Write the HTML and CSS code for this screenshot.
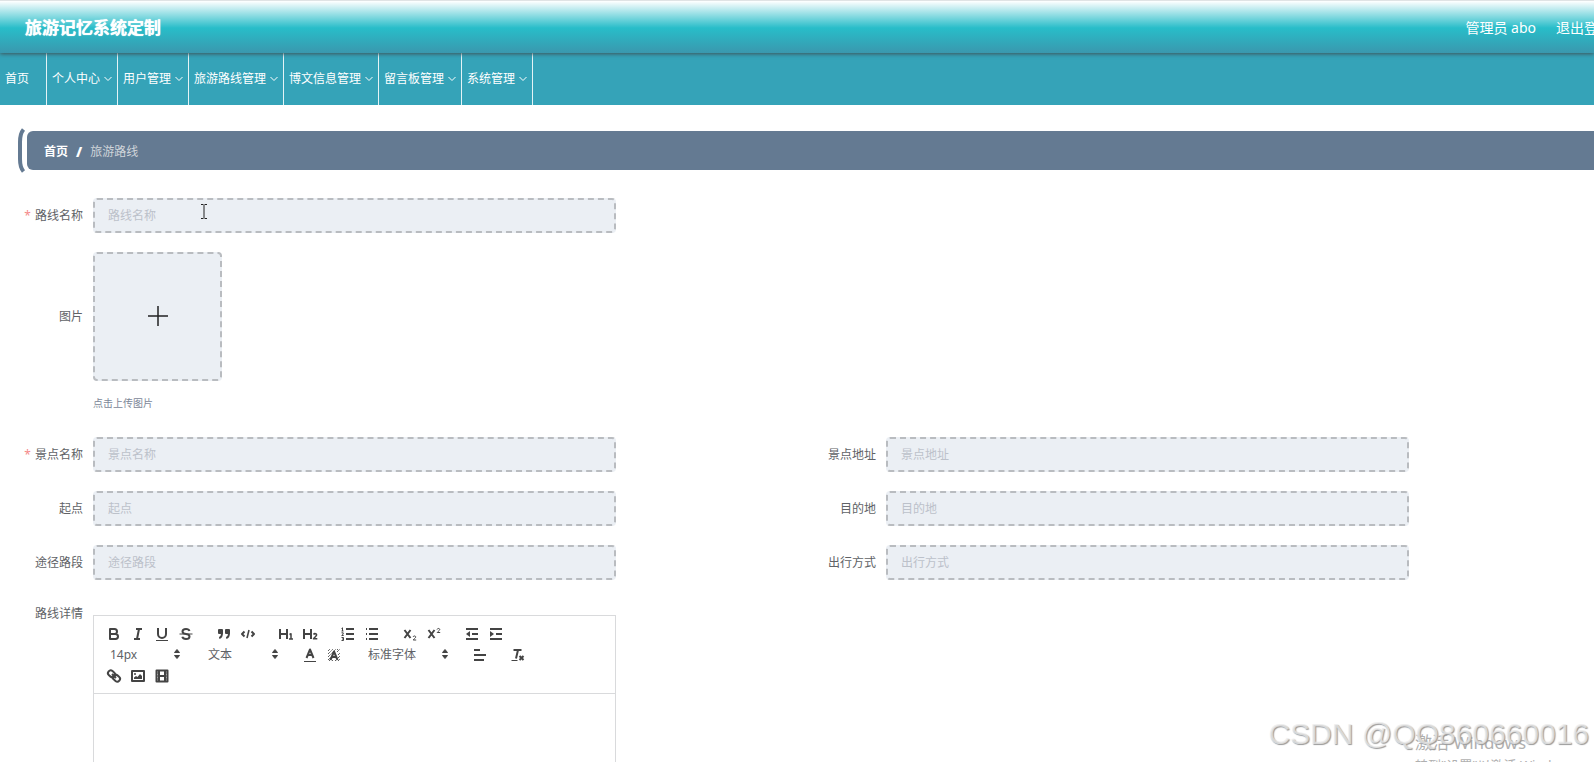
FILE: index.html
```html
<!DOCTYPE html>
<html lang="zh-CN">
<head>
<meta charset="utf-8">
<title>旅游记忆系统定制</title>
<link rel="stylesheet" href="styles.css">
</head>
<body>
<svg class="defs" aria-hidden="true">
  <symbol id="chev" viewBox="0 0 8 8"><path d="M.5 2l3.500 3.500L7.500 2" fill="none" stroke="currentColor"/></symbol>
  <symbol id="updown" viewBox="0 0 18 18"><path d="M6.500 7.500L9 4.500l2.500 3zM6.500 10.500L9 13.500l2.500-3z" fill="currentColor" stroke="currentColor" stroke-linejoin="round"/></symbol>
</svg>
<header class="top">
  <h1 class="brand">旅游记忆系统定制</h1>
  <div class="user"><span>管理员 abo</span><a href="#">退出登录</a></div>
</header>
<nav class="menu">
  <a class="menu-item" href="#">首页</a>
  <a class="menu-item" href="#">个人中心<svg class="chev"><use href="#chev"/></svg></a>
  <a class="menu-item" href="#">用户管理<svg class="chev"><use href="#chev"/></svg></a>
  <a class="menu-item" href="#">旅游路线管理<svg class="chev"><use href="#chev"/></svg></a>
  <a class="menu-item" href="#">博文信息管理<svg class="chev"><use href="#chev"/></svg></a>
  <a class="menu-item" href="#">留言板管理<svg class="chev"><use href="#chev"/></svg></a>
  <a class="menu-item" href="#">系统管理<svg class="chev"><use href="#chev"/></svg></a>
</nav>
<main class="page">
  <div class="crumbs"><svg class="bracket" viewBox="0 0 8 45" aria-hidden="true"><path d="M6.500 1.500C3.500 5 3 9 3 14v17c0 5 .5 9 3.500 12.500" fill="none" stroke="#647a92" stroke-width="4"/></svg><a href="#">首页</a><b>/</b><span>旅游路线</span></div>
  <form class="form">
    <div class="field wide required">
      <label for="name">路线名称</label>
      <div class="control">
        <input id="name" class="text" type="text" placeholder="路线名称">
        <svg class="ibeam" viewBox="0 0 8 15" aria-hidden="true"><path d="M1 .5h2.500M4.500 .5H7M4 1v13M1 14.500h2.500M4.500 14.500H7" fill="none" stroke="#222"/></svg>
      </div>
    </div>
    <div class="field wide upload-field">
      <label for="pic">图片</label>
      <div class="control">
        <button id="pic" class="upload" type="button" aria-label="上传图片"><svg viewBox="0 0 20 20"><path d="M0 9h20M10 -1v20" stroke="#222" stroke-width="1.500"/></svg></button>
        <p class="hint">点击上传图片</p>
      </div>
    </div>
    <div class="field required"><label for="spot">景点名称</label><div class="control"><input id="spot" class="text" type="text" placeholder="景点名称"></div></div>
    <div class="field"><label for="addr">景点地址</label><div class="control"><input id="addr" class="text" type="text" placeholder="景点地址"></div></div>
    <div class="field"><label for="from">起点</label><div class="control"><input id="from" class="text" type="text" placeholder="起点"></div></div>
    <div class="field"><label for="to">目的地</label><div class="control"><input id="to" class="text" type="text" placeholder="目的地"></div></div>
    <div class="field"><label for="via">途径路段</label><div class="control"><input id="via" class="text" type="text" placeholder="途径路段"></div></div>
    <div class="field"><label for="mode">出行方式</label><div class="control"><input id="mode" class="text" type="text" placeholder="出行方式"></div></div>
    <div class="field wide editor-field">
      <label for="detail">路线详情</label>
      <div class="control editor">
        <div class="toolbar">
          <div class="group">
            <button type="button" aria-label="粗体"><svg viewBox="0 0 18 18"><path class="s" d="M5 4h4.500a2.500 2.500 0 0 1 0 5H5zM5 9h5.500a2.500 2.500 0 0 1 0 5H5z"/></svg></button>
            <button type="button" aria-label="斜体"><svg viewBox="0 0 18 18"><path class="s" d="M7 4h6M5 14h6M8 14l2-10"/></svg></button>
            <button type="button" aria-label="下划线"><svg viewBox="0 0 18 18"><path class="s" d="M5 3v6a4 4 0 0 0 8 0V3"/><path class="t" d="M3 15.500h12"/></svg></button>
            <button type="button" aria-label="删除线"><svg viewBox="0 0 18 18"><path class="t" d="M2.500 9h13"/><path class="s" d="M12.500 6C12 4.600 10.700 4 9 4 7 4 5.500 5 5.500 6.500S7 8.800 9 9s3.500 1 3.500 2.500S11 14 9 14s-3.300-.8-3.700-2.200"/></svg></button>
          </div>
          <div class="group">
            <button type="button" aria-label="引用"><svg viewBox="0 0 18 18"><path class="f s" d="M4 5h3v3H4zM11 5h3v3h-3z"/><path class="s" d="M7 8c0 2.800-.8 4.500-2.800 5M14 8c0 2.800-.8 4.500-2.800 5"/></svg></button>
            <button type="button" aria-label="代码"><svg viewBox="0 0 18 18"><path class="s" d="M5.500 6.500L3 9l2.500 2.500M12.500 6.500L15 9l-2.500 2.500"/><path class="m" d="M10 5L8 13"/></svg></button>
          </div>
          <div class="group">
            <button type="button" aria-label="标题 1"><svg viewBox="0 0 18 18"><path class="s" d="M3 4v10M10 4v10M3 9h7"/><path class="m" d="M12.500 9.500l1.500-.7V14M12 14h4"/></svg></button>
            <button type="button" aria-label="标题 2"><svg viewBox="0 0 18 18"><path class="s" d="M3 4v10M10 4v10M3 9h7"/><path class="m" d="M12.500 9.500c1-1.500 3.500-.9 3 .8-.3 1-2 2-3 3.500H16.300"/></svg></button>
          </div>
          <div class="group">
            <button type="button" aria-label="有序列表"><svg viewBox="0 0 18 18"><path class="s" d="M7 4h8M7 9h8M7 14h8"/><path class="t" d="M2.500 3.500l1-.7V6M2.500 6h2M2.500 7.800h1.700v1.400L2.700 10.500h2M2.500 12.500h2v3h-2M3 14h1.500"/></svg></button>
            <button type="button" aria-label="无序列表"><svg viewBox="0 0 18 18"><path class="s" d="M6 4h9M6 9h9M6 14h9M3 4h1M3 9h1M3 14h1"/></svg></button>
          </div>
          <div class="group">
            <button type="button" aria-label="下标"><svg viewBox="0 0 18 18"><path class="s" d="M3.500 5l6 8M9.500 5l-6 8"/><path class="t" d="M12 12c.5-1.500 3-1.300 2.700.2-.2.900-1.700 1.600-2.500 2.800H15.200"/></svg></button>
            <button type="button" aria-label="上标"><svg viewBox="0 0 18 18"><path class="s" d="M3.500 5l6 8M9.500 5l-6 8"/><path class="t" d="M12 4.500c.5-1.500 3-1.300 2.700.2-.2.900-1.700 1.600-2.500 2.800H15.200"/></svg></button>
          </div>
          <div class="group">
            <button type="button" aria-label="减少缩进"><svg viewBox="0 0 18 18"><path class="s" d="M3 4h12M3 14h12M9 9h6"/><path class="f" d="M7 6v6L3 9z"/></svg></button>
            <button type="button" aria-label="增加缩进"><svg viewBox="0 0 18 18"><path class="s" d="M3 4h12M3 14h12M9 9h6"/><path class="f" d="M3 6v6l4-3z"/></svg></button>
          </div>
          <div class="picker"><select aria-label="字号"><option>14px</option></select><svg><use href="#updown"/></svg></div>
          <div class="picker"><select aria-label="段落"><option>文本</option></select><svg><use href="#updown"/></svg></div>
          <div class="group">
            <button type="button" aria-label="文字颜色"><svg viewBox="0 0 18 18"><path class="t" d="M3 15.500h12"/><path class="s" d="M5.500 12L9 3.500l3.500 8.500M7 9h4"/></svg></button>
            <button type="button" aria-label="背景颜色"><svg viewBox="0 0 18 18"><path class="t" d="M3 5l2-2M3 8l5-5M3 11l8-8M3 14l3-3M4 15l2-2M7 15l1-1M10 15l1-1M12 4l1-1M12 6l3-3M13 9l2-2M13 12l2-2M13 15l2-2" stroke-dasharray="1.200 .6"/><path class="s" d="M5.500 14L9 5.500l3.500 8.500M7 11h4"/></svg></button>
          </div>
          <div class="picker font"><select aria-label="字体"><option>标准字体</option></select><svg><use href="#updown"/></svg></div>
          <div class="group"><button type="button" aria-label="对齐"><svg viewBox="0 0 18 18"><path class="s" d="M3 9h12M3 14h10M3 4h6"/></svg></button></div>
          <div class="group"><button type="button" aria-label="清除格式"><svg viewBox="0 0 18 18"><path class="s" d="M4.500 4h8M9 4L7 12.500M10.500 10l4 4M14.500 10l-4 4"/><path class="t" d="M2.500 14.500h6"/></svg></button></div>
          <div class="group">
            <button type="button" aria-label="链接"><svg viewBox="0 0 18 18"><g class="s"><rect x="3" y="4" width="7.500" height="5.500" rx="2.700" transform="rotate(40 6.500 6.500)"/><rect x="7.500" y="8.500" width="7.500" height="5.500" rx="2.700" transform="rotate(40 11.500 11.500)"/><path d="M7 7l4 4"/></g></svg></button>
            <button type="button" aria-label="图片"><svg viewBox="0 0 18 18"><path class="s" d="M3 4h12v10H3z"/><circle class="f" cx="6" cy="7" r="1"/><path class="f" d="M5 12v-1.500l2-1.500 1.500 1L11 7l2 2v3z"/></svg></button>
            <button type="button" aria-label="视频"><svg viewBox="0 0 18 18"><path class="s" d="M3.500 3.500h11v11h-11zM6 3v12M12 3v12M6 9h6"/><path class="t" d="M3 6h3M3 9h3M3 12h3M12 6h3M12 9h3M12 12h3"/></svg></button>
          </div>
        </div>
        <textarea id="detail" class="editor-body"></textarea>
      </div>
    </div>
  </form>
</main>
<div class="activate"><p class="activate-title">激活 Windows</p><p class="activate-sub">转到"设置"以激活 Windows。</p></div>
<div class="watermark">CSDN @QQ860660016</div>
</body>
</html>
```
FILE: styles.css
```css
* { box-sizing: border-box; }
body {
  position: relative;
  margin: 0;
  height: 100vh;
  overflow: hidden;
  background: #fff;
  color: #606266;
  font: 12px/20px "Noto Sans", "Noto Sans CJK SC", sans-serif;
}
a { color: inherit; text-decoration: none; }
p { margin: 0; }
button, input, select, textarea { font: inherit; color: inherit; }
.defs { display: none; }

.top {
  position: relative;
  display: flex;
  align-items: center;
  justify-content: space-between;
  height: 53px;
  padding: 2px 0 0 25px;
  border-top: 1px solid #dfe3e4;
  background: linear-gradient(#fff 0%, #28bdc9 52%, #3a98ae 100%);
  box-shadow: 0 1px 4px #3d5258;
  color: #fff;
}
.brand {
  margin: 0;
  font-size: 17px;
  line-height: 24px;
  font-weight: 700;
  text-shadow: 0 0 1px #fff;
}
.user { display: flex; gap: 20px; margin-right: -18px; font-size: 14px; white-space: nowrap; }

.menu { display: flex; height: 52px; background: #35a3b8; color: #fff; }
.menu-item {
  display: flex;
  align-items: center;
  gap: 4px;
  padding: 0 5px;
  border-right: 1px solid #e4f3f6;
  white-space: nowrap;
}
.menu-item:first-child { padding-right: 17px; }
.chev { width: 8px; height: 8px; }

.page { margin: 26px -10px 0 18px; }
.crumbs {
  position: relative;
  display: flex;
  gap: 8px;
  align-items: center;
  height: 39px;
  margin-left: 9px;
  padding: 2px 0 0 17px;
  border-radius: 6px;
  background: #647a92;
  color: #fff;
  font-weight: 700;
}
.crumbs b { font-size: 14px; }
.crumbs span { color: #d0d5da; font-weight: 400; }
.bracket { position: absolute; left: -10px; top: -3px; width: 8px; height: 45px; }

.form {
  display: grid;
  grid-template-columns: 1fr 1fr;
  row-gap: 19px;
  margin-top: 28px;
}
.field { display: flex; gap: 10px; }
.wide { grid-column: 1 / -1; }
.field label { width: 65px; flex: none; text-align: right; line-height: 35px; white-space: nowrap; }
.required label::before { content: "*"; margin-right: 4px; color: #f58a8a; }
.control { position: relative; width: 33%; flex: none; }
.field:not(.wide) .control { width: 66%; }
.text {
  display: block;
  width: 100%;
  height: 35px;
  padding: 0 13px;
  border: 2px dashed #b9bcc0;
  border-radius: 4px;
  background: #ebeff4;
  outline: 0;
}
.text::placeholder { color: #bcc1ca; opacity: 1; }
.ibeam { position: absolute; left: 107px; top: 6px; width: 8px; height: 15px; }
.upload {
  display: flex;
  align-items: center;
  justify-content: center;
  width: 129px;
  height: 129px;
  padding: 0;
  border: 2px dashed #b9bcc0;
  border-radius: 4px;
  background: #ebeff4;
}
.upload svg { width: 20px; height: 20px; overflow: visible; }
.upload-field label { line-height: 129px; }
.hint { margin: 12px 0 13px; color: #7c8798; font-size: 10px; line-height: 20px; }
.upload-field { margin-bottom: -8px; }

.editor-field label { line-height: 30px; }
.editor { margin-top: 16px; border: 1px solid #d9dadc; }
.toolbar {
  display: flex;
  flex-wrap: wrap;
  column-gap: 14px;
  padding: 7px 24px 7px 8px;
  border-bottom: 1px solid #d9dadc;
  color: #444;
}
.group { display: flex; }
.group button {
  display: flex;
  align-items: center;
  justify-content: center;
  width: 24px;
  height: 21px;
  padding: 0;
  border: 0;
  background: none;
}
.group svg { width: 18px; height: 18px; }
.s, .m, .t { fill: none; stroke: #444; stroke-linejoin: round; }
.s { stroke-width: 2; }
.m { stroke-width: 1.500; }
.t { stroke-width: 1; }
.f { fill: #444; }
.picker { position: relative; width: 84px; height: 21px; }
.font { width: 94px; }
.picker select {
  width: 100%;
  height: 21px;
  padding: 0 8px;
  border: 0;
  background: none;
  color: #606266;
  appearance: none;
}
.picker svg { position: absolute; right: 0; top: 1px; width: 18px; height: 18px; pointer-events: none; }
.editor-body { display: block; width: 100%; height: 200px; border: 0; resize: none; outline: 0; }

.activate { position: absolute; left: calc(100% - 179px); top: calc(100% - 31px); white-space: nowrap; color: #b0b0b0; }
.activate-title { font-size: 17px; line-height: 24px; }
.activate-sub { font-size: 13px; line-height: 20px; }
.watermark {
  position: absolute;
  right: 5px;
  bottom: 10px;
  color: rgba(236, 236, 236, .75);
  font: 30px/36px "Liberation Sans", Arial, sans-serif;
  text-shadow: 1px 1px 1px #999;
  white-space: nowrap;
}
```
